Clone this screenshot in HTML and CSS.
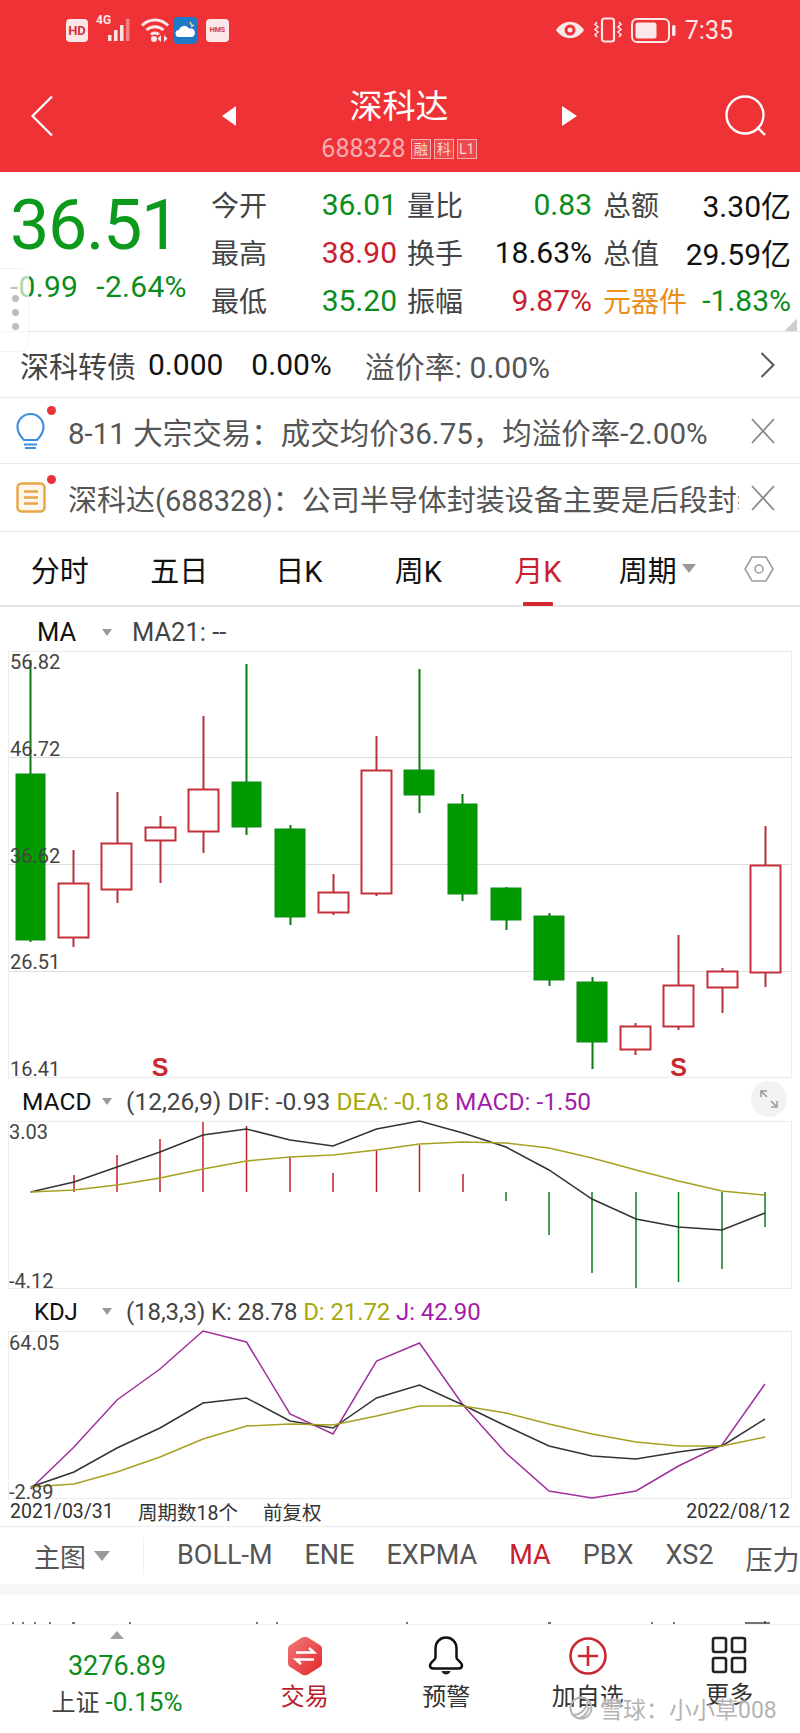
FILE: index.html
```html
<!DOCTYPE html>
<html lang="zh-CN">
<head>
    <meta charset="UTF-8">
    <meta name="viewport" content="width=device-width, initial-scale=1.0">
    <title>深科达 688328</title>
    <link rel="stylesheet" href="styles.css">
</head>
<body>
<div class="page">

    <!-- red header -->
    <header class="top">
        <div class="status">
            <div class="status-left">
                <span class="badge badge-hd">HD</span>
                <span class="net">
                    <span class="net-4g">4G</span>
                    <svg width="24" height="24" viewBox="0 0 24 24"><g fill="#fbe6e8"><rect x="0" y="17" width="3.500" height="6"/><rect x="6" y="12" width="3.500" height="11"/><rect x="12" y="7" width="3.500" height="16"/><rect x="18" y="1" width="3.500" height="22" opacity=".45"/></g></svg>
                </span>
                <svg class="wifi" width="30" height="26" viewBox="0 0 30 26"><g fill="none" stroke="#fbe6e8" stroke-width="3"><path d="M2 8.500c7-7.500 19-7.500 26 0"/><path d="M6.500 13c4.500-4.500 12.500-4.500 17 0"/><path d="M11 17.500c2-2 6-2 8 0"/></g><circle cx="14" cy="22" r="3" fill="#fbe6e8"/><path d="M21 18v7l-3.500-3.500zM24 18v7l3.500-3.500z" fill="#fbe6e8"/></svg>
                <svg class="weather" width="25" height="27" viewBox="0 0 25 27"><rect width="25" height="27" rx="5" fill="#1f78c8"/><path d="M6 20a3.500 3.500 0 0 1 0-7 5.500 5.500 0 0 1 10-1.500 4.500 4.500 0 0 1 3 8.500z" fill="#fff"/><path d="M17 5l1.500 3M21 8l-3 1.500" stroke="#f7dc8a" stroke-width="1.500"/></svg>
                <span class="badge badge-hms">HMS</span>
            </div>
            <div class="status-right">
                <svg width="30" height="20" viewBox="0 0 30 20"><path d="M1 10C8 -1 22 -1 29 10 22 21 8 21 1 10z" fill="#fbe6e8"/><circle cx="15" cy="10" r="5.500" fill="#ef3236"/><circle cx="15" cy="10" r="2.500" fill="#fbe6e8"/></svg>
                <svg width="30" height="26" viewBox="0 0 30 26"><rect x="9" y="1.500" width="12" height="23" rx="2.500" fill="none" stroke="#fbe6e8" stroke-width="2.200"/><path d="M4 5l-2 2.500 3 2.500-3 2.500 3 2.500-3 2.500 2 2.500M26 5l2 2.500-3 2.500 3 2.500-3 2.500 3 2.500-2 2.500" fill="none" stroke="#fbe6e8" stroke-width="1.600"/></svg>
                <svg width="46" height="25" viewBox="0 0 46 25"><rect x="1" y="1" width="37" height="23" rx="5" fill="none" stroke="#fbe6e8" stroke-width="2"/><rect x="4.500" y="4.500" width="21" height="16" rx="2.500" fill="#fbe6e8"/><rect x="41" y="7" width="3.500" height="11" rx="1.500" fill="#fbe6e8"/></svg>
                <span class="clock">7:35</span>
            </div>
        </div>
        <div class="titlebar">
            <svg class="back" width="24" height="42" viewBox="0 0 24 42"><path d="M22 1.500L2.500 21 22 40.500" fill="none" stroke="#fff" stroke-width="2.200"/></svg>
            <svg width="14" height="20" viewBox="0 0 14 20"><path d="M14 0v20L0 10z" fill="#fff"/></svg>
            <div class="title">
                <div class="title-name">深科达</div>
                <div class="title-code">688328<span class="tag">融</span><span class="tag">科</span><span class="tag">L1</span></div>
            </div>
            <svg width="15" height="20" viewBox="0 0 15 20"><path d="M0 0v20l15-10z" fill="#fff"/></svg>
            <svg class="search" width="42" height="42" viewBox="0 0 42 42"><circle cx="20" cy="20" r="18.500" fill="none" stroke="#fff" stroke-width="2.400"/><path d="M32 32l8 8" stroke="#fff" stroke-width="2.400"/></svg>
        </div>
    </header>

    <!-- quote -->
    <section class="quote">
        <div class="price-box">
            <div class="price">36.51</div>
            <div class="change"><span>-0.99</span><span>-2.64%</span></div>
        </div>
        <div class="stats">
            <span class="lbl">今开</span><span class="val green">36.01</span>
            <span class="lbl lbl-2">量比</span><span class="val green">0.83</span>
            <span class="lbl lbl-3">总额</span><span class="val">3.30亿</span>
            <span class="lbl">最高</span><span class="val red">38.90</span>
            <span class="lbl lbl-2">换手</span><span class="val">18.63%</span>
            <span class="lbl lbl-3">总值</span><span class="val">29.59亿</span>
            <span class="lbl">最低</span><span class="val green">35.20</span>
            <span class="lbl lbl-2">振幅</span><span class="val red">9.87%</span>
            <span class="lbl lbl-3 sector">元器件</span><span class="val green">-1.83%</span>
        </div>
        <div class="handle"><i></i><i></i><i></i></div>
        <div class="corner"></div>
    </section>

    <!-- info rows -->
    <div class="row row-bond">
        <span class="bond-name">深科转债</span>
        <span class="bond-val">0.000</span>
        <span class="bond-pct">0.00%</span>
        <span class="bond-rate">溢价率: 0.00%</span>
        <svg class="row-arrow" width="15" height="26" viewBox="0 0 15 26"><path d="M1.500 1L13.500 13 1.500 25" fill="none" stroke="#555" stroke-width="2"/></svg>
    </div>
    <div class="row row-news">
        <div class="news-icon">
            <svg width="30" height="36" viewBox="0 0 30 36"><path d="M8 27C3 22 1.500 18 1.500 14a13 13 0 0 1 26 0c0 4-1.500 8-6.500 13z" fill="none" stroke="#3f8fe0" stroke-width="2.200"/><path d="M8 31.500h13M9 35h11" stroke="#3f8fe0" stroke-width="2"/></svg>
            <i class="dot"></i>
        </div>
        <span class="news-text">8-11 大宗交易：成交均价36.75，均溢价率-2.00%</span>
        <svg class="close" width="24" height="26" viewBox="0 0 24 26"><path d="M1 1l22 24M23 1L1 25" stroke="#8a8a8a" stroke-width="1.800"/></svg>
    </div>
    <div class="row row-news row-news2">
        <div class="news-icon">
            <svg width="30" height="31" viewBox="0 0 30 31"><rect x="1.500" y="1.500" width="27" height="28" rx="4" fill="#fdf6ea" stroke="#e8a548" stroke-width="2.400"/><path d="M8 9.500h14M8 15.500h14M8 21.500h14" stroke="#e8a548" stroke-width="2.400"/></svg>
            <i class="dot"></i>
        </div>
        <span class="news-text">深科达(688328)：公司半导体封装设备主要是后段封装设备</span>
        <svg class="close" width="24" height="26" viewBox="0 0 24 26"><path d="M1 1l22 24M23 1L1 25" stroke="#8a8a8a" stroke-width="1.800"/></svg>
    </div>

    <!-- period tabs -->
    <nav class="tabs">
        <a class="tab">分时</a>
        <a class="tab">五日</a>
        <a class="tab">日K</a>
        <a class="tab">周K</a>
        <a class="tab tab-on">月K</a>
        <a class="tab">周期<i class="tri tri-tab"></i></a>
        <span class="tab-set">
            <svg width="30" height="26" viewBox="0 0 30 26"><path d="M8 1h14l7 12-7 12H8L1 13z" fill="none" stroke="#999" stroke-width="1.500"/><circle cx="15" cy="13" r="4" fill="none" stroke="#999" stroke-width="1.500"/></svg>
        </span>
    </nav>

    <div class="ind-head ind-ma">
        <span class="ind-name">MA</span><i class="tri"></i>
        <span class="ind-vals">MA21: --</span>
    </div>

    <!-- K line, coordinates are page coordinates -->
    <svg class="chart chart-k" viewBox="0 651 800 428">
        <rect class="frame" x="8.500" y="651.500" width="783" height="426"/>
        <path class="grid" d="M9 757.500h782M9 864.500h782M9 971.500h782"/>
        <g class="wick-g">
            <path d="M30.500 660V942M246.500 664V835M290.500 825V925M419.500 669V813M462.500 794V901M506.500 887V930M549.500 913V986M592.500 977V1069"/>
        </g>
        <g class="wick-r">
            <path d="M73.500 850V947M117.500 792V903M160.500 816V883M203.500 716V853M333.500 874V915M376.500 736V896M635.500 1023V1055M678.500 935V1030M722.500 968V1013M765.500 826V987"/>
        </g>
        <g class="body-g">
            <rect x="16" y="774" width="29" height="166"/>
            <rect x="232" y="782" width="29" height="45"/>
            <rect x="275" y="829" width="30" height="88"/>
            <rect x="404" y="770" width="30" height="25"/>
            <rect x="448" y="804" width="29" height="90"/>
            <rect x="491" y="888" width="30" height="32"/>
            <rect x="534" y="916" width="30" height="64"/>
            <rect x="577" y="982" width="30" height="60"/>
        </g>
        <g class="body-r">
            <rect x="58.500" y="883.500" width="30" height="54"/>
            <rect x="101.500" y="843.500" width="30" height="46"/>
            <rect x="145.500" y="827.500" width="30" height="13"/>
            <rect x="188.500" y="789.500" width="30" height="42"/>
            <rect x="318.500" y="892.500" width="30" height="20"/>
            <rect x="361.500" y="770.500" width="30" height="123"/>
            <rect x="620.500" y="1026.500" width="30" height="23"/>
            <rect x="663.500" y="985.500" width="30" height="41"/>
            <rect x="707.500" y="971.500" width="30" height="16"/>
            <rect x="750.500" y="865.500" width="30" height="107"/>
        </g>
        <g class="axis">
            <text x="10" y="669">56.82</text>
            <text x="10" y="756">46.72</text>
            <text x="10" y="863">36.62</text>
            <text x="10" y="969">26.51</text>
            <text x="10" y="1076">16.41</text>
        </g>
        <text class="mark" x="160" y="1076">S</text>
        <text class="mark" x="678.500" y="1076">S</text>
    </svg>

    <div class="ind-head ind-macd">
        <span class="ind-name">MACD</span><i class="tri"></i>
        <span class="ind-vals">(12,26,9) DIF: -0.93 <span class="c-dea">DEA: -0.18</span> <span class="c-j">MACD: -1.50</span></span>
        <span class="expand">
            <svg width="20" height="20" viewBox="0 0 20 20"><path d="M8 2H2v6M2 2l6 6M12 18h6v-6M18 18l-6-6" fill="none" stroke="#999" stroke-width="1.500"/></svg>
        </span>
    </div>

    <svg class="chart chart-macd" viewBox="0 1121 800 168">
        <rect class="frame" x="8.500" y="1121.500" width="783" height="167"/>
        <g class="bar-r">
            <path d="M74 1192V1175M117 1192V1155M160 1192V1139M203 1192V1122M246.500 1192V1126M290 1192V1157M333 1192V1173M376.500 1192V1150M419.500 1192V1145M463 1192V1174"/>
        </g>
        <g class="bar-g">
            <path d="M506 1192V1201M549 1192V1235M592 1192V1273M636 1192V1288M678.500 1192V1282M722 1192V1269M765 1192V1227"/>
        </g>
        <polyline class="ln-k" points="30.600,1192 74,1182 117,1167 160,1152 203,1135 246.500,1129 290,1140 333,1146 376.500,1129 419.500,1121 463,1133 506,1147 549,1170 592,1199 636,1219 678.500,1227 722,1230 765,1213"/>
        <polyline class="ln-d" points="30.600,1192 74,1190 117,1185 160,1178 203,1169 246.500,1161 290,1157 333,1155 376.500,1150 419.500,1144 463,1142 506,1143 549,1148 592,1158 636,1170 678.500,1181 722,1191 765,1195"/>
        <g class="axis">
            <text x="9" y="1139">3.03</text>
            <text x="9" y="1288">-4.12</text>
        </g>
    </svg>

    <div class="ind-head ind-kdj">
        <span class="ind-name">KDJ</span><i class="tri"></i>
        <span class="ind-vals">(18,3,3) K: 28.78 <span class="c-dea">D: 21.72</span> <span class="c-j">J: 42.90</span></span>
    </div>

    <svg class="chart chart-kdj" viewBox="0 1331 800 169">
        <rect class="frame" x="8.500" y="1331.500" width="783" height="167"/>
        <polyline class="ln-j" points="30.600,1489 74,1447 117,1400 160,1369 203,1331 246.500,1342 290,1414 333,1434 376.500,1361 419.500,1343 463,1405 506,1453 549,1491 592,1498 636,1491 678.500,1466 722,1445 765,1384"/>
        <polyline class="ln-k" points="30.600,1487 74,1472 117,1448 160,1428 203,1403 246.500,1398 290,1421 333,1428 376.500,1398 419.500,1385 463,1405 506,1426 549,1446 592,1456 636,1459 678.500,1452 722,1446 765,1419"/>
        <polyline class="ln-d" points="30.600,1487 74,1484 117,1472 160,1457 203,1439 246.500,1426 290,1424 333,1425 376.500,1416 419.500,1406 463,1406 506,1413 549,1424 592,1434 636,1442 678.500,1446 722,1446 765,1437"/>
        <g class="axis">
            <text x="9" y="1350">64.05</text>
            <text x="9" y="1499">-2.89</text>
        </g>
    </svg>

    <div class="dates">
        <span class="date-start">2021/03/31</span>
        <span class="date-count">周期数18个</span>
        <span>前复权</span>
        <span class="date-end">2022/08/12</span>
    </div>

    <!-- indicator switch -->
    <div class="indicators">
        <div class="ind-main">主图<i class="tri tri-main"></i></div>
        <div class="ind-list">
            <span>BOLL-M</span><span>ENE</span><span>EXPMA</span><span class="on">MA</span><span>PBX</span><span>XS2</span><span>压力支撑</span>
        </div>
    </div>
    <div class="band"></div>
    <div class="cut-row">
        <svg width="800" height="29" viewBox="0 0 800 29"><path d="M13 27v2M23 27v2M35 27v2M50 27v2M72 28h3M130 27v2M257 27v2M277 27v2M407 27v2M548 28h3M652 27v2M674 27v2M745 28h25M765 26v3" stroke="#444" stroke-width="1.500"/></svg>
    </div>

    <!-- bottom bar -->
    <footer class="bottom">
        <div class="index-box">
            <i class="tri-up"></i>
            <div class="index-val">3276.89</div>
            <div class="index-name">上证 <span class="index-pct green">-0.15%</span></div>
        </div>
        <a class="act act-on">
            <svg width="36" height="40" viewBox="0 0 36 40"><defs><linearGradient id="hexred" x1="0" y1="0" x2="1" y2="1"><stop offset="0" stop-color="#f27a7a"/><stop offset="1" stop-color="#e4262c"/></linearGradient></defs><path d="M15 1.500a6 6 0 0 1 6 0l11 7a5 5 0 0 1 3 4.500v14a5 5 0 0 1-3 4.500l-11 7a6 6 0 0 1-6 0l-11-7a5 5 0 0 1-3-4.500V13a5 5 0 0 1 3-4.500z" fill="url(#hexred)"/><path d="M9 16.500h18l-5-4.500M27 23.500H9l5 4.500" fill="none" stroke="#fff" stroke-width="2.500"/></svg>
            <span>交易</span>
        </a>
        <a class="act">
            <svg width="36" height="40" viewBox="0 0 36 40"><path d="M18 1.500c6 0 10.500 4.500 10.500 11v9c0 2.500 5.500 4.500 5.500 8 0 2-1.500 3-3.500 3h-25c-2 0-3.500-1-3.500-3 0-3.500 5.500-5.500 5.500-8v-9C7.500 6 12 1.500 18 1.500z" fill="none" stroke="#111" stroke-width="2.500"/><path d="M13.500 35h9c-1 4.500-8 4.500-9 0z" fill="#222"/></svg>
            <span>预警</span>
        </a>
        <a class="act">
            <svg width="40" height="40" viewBox="0 0 40 40"><circle cx="20" cy="20" r="17.500" fill="none" stroke="#c9282e" stroke-width="2.600"/><path d="M10 20h20M20 10v20" stroke="#c9282e" stroke-width="2.600"/></svg>
            <span>加自选</span>
        </a>
        <a class="act">
            <svg width="36" height="38" viewBox="0 0 36 38"><g fill="none" stroke="#222" stroke-width="2.600"><rect x="2" y="2" width="13" height="14" rx="2"/><rect x="21" y="2" width="13" height="14" rx="2"/><rect x="2" y="22" width="13" height="14" rx="2"/><rect x="21" y="22" width="13" height="14" rx="2"/></g></svg>
            <span>更多</span>
        </a>
        <div class="watermark">
            <svg width="28" height="24" viewBox="0 0 28 24"><g fill="none" stroke="#b5b5b5" stroke-width="2"><circle cx="13" cy="12" r="10.500"/><path d="M4 19c8 0 14-5 16-14M12 22c5-2 8-7 9-11"/></g></svg>
            <span>雪球：小小草008</span>
        </div>
    </footer>
</div>
</body>
</html>
```
FILE: styles.css
```css
* {
    box-sizing: border-box;
}
html, body {
    margin: 0;
    padding: 0;
    background: #fff;
}
body {
    font-family: Roboto, "Noto Sans CJK SC", sans-serif;
    color: #111;
}
i {
    font-style: normal;
}
svg {
    display: block;
}
.page {
    position: relative;
    width: 800px;
    height: 1733px;
    overflow: hidden;
}
.green { color: #0c8c1c; }
.red { color: #c9202e; }

/* header */
.top {
    height: 172px;
    background: #ef3236;
    color: #fff;
}
.status {
    height: 60px;
    padding: 0 67px 0 66px;
    display: flex;
    justify-content: space-between;
    align-items: center;
}
.status-left, .status-right {
    display: flex;
    align-items: center;
}
.badge {
    width: 22px;
    height: 23px;
    border-radius: 4px;
    background: #fbe6e8;
    color: #d8323a;
    display: flex;
    align-items: center;
    justify-content: center;
    font-weight: 700;
}
.badge-hd { font-size: 13px; }
.badge-hms {
    margin-left: 8px;
    width: 23px;
    font-size: 7px;
}
.net {
    position: relative;
    margin-left: 20px;
    width: 24px;
    height: 24px;
}
.net-4g {
    position: absolute;
    left: -12px;
    top: -5px;
    font-size: 12px;
    font-weight: 700;
    color: #fbe6e8;
}
.wifi { margin-left: 8px; }
.weather { margin-left: 3px; }
.status-right { gap: 8px; }
.clock {
    font-size: 25px;
    color: #fbe6e8;
}
.titlebar {
    height: 112px;
    display: grid;
    grid-template-columns: 222px 14px 1fr 15px 223px;
    align-items: center;
}
.back { margin-left: 30px; }
.search {
    justify-self: end;
    margin-right: 33px;
}
.title {
    align-self: start;
    padding-top: 24px;
    text-align: center;
}
.title-name {
    font-size: 33px;
    line-height: 46px;
}
.title-code {
    display: flex;
    justify-content: center;
    align-items: center;
    font-size: 25px;
    line-height: 38px;
    color: #f5aeb0;
}
.tag {
    width: 20px;
    height: 20px;
    margin-left: 3px;
    border: 1px solid #f5aeb0;
    background: rgba(255, 255, 255, .12);
    font-size: 14px;
    line-height: 18px;
    text-align: center;
    color: #fbd5d6;
}
.tag:first-of-type { margin-left: 5px; }

/* quote */
.quote {
    position: relative;
    height: 160px;
    display: flex;
    border-bottom: 1px solid #e8e8e8;
}
.price-box {
    width: 211px;
    flex: none;
    padding-left: 10px;
}
.price {
    padding-top: 11px;
    font-size: 70px;
    line-height: 84px;
    letter-spacing: -1.400px;
    color: #0c9a1c;
}
.change {
    display: flex;
    gap: 18px;
    font-size: 30px;
    line-height: 40px;
    letter-spacing: .3px;
    color: #0c8c1c;
}
.stats {
    flex: none;
    padding-top: 8px;
    display: grid;
    grid-template-columns: 56px 130px 66px 129px 67px 132px;
    grid-auto-rows: 48px;
    align-items: center;
    font-size: 28px;
    white-space: nowrap;
}
.lbl { color: #444; }
.lbl-2 { padding-left: 10px; }
.lbl-3 { padding-left: 11px; }
.sector { color: #e8901e; }
.val {
    text-align: right;
    font-size: 30px;
}
.handle {
    position: absolute;
    left: -10px;
    top: 96px;
    width: 39px;
    height: 84px;
    border: 1px solid #f3f3f3;
    border-radius: 10px;
    background: rgba(255, 255, 255, .65);
    padding: 26px 9px 0 0;
    display: flex;
    flex-direction: column;
    align-items: flex-end;
    gap: 7px;
}
.handle i {
    width: 7px;
    height: 7px;
    border-radius: 50%;
    background: #bdbdbd;
}
.corner {
    position: absolute;
    right: 3px;
    top: 146px;
    width: 13px;
    height: 13px;
    background: linear-gradient(135deg, transparent 50%, #cfcfcf 50%);
}

/* info rows */
.row {
    height: 66px;
    padding: 0 25px 0 20px;
    display: flex;
    align-items: center;
    border-bottom: 1px solid #ececec;
    font-size: 30px;
    white-space: nowrap;
}
.row-news2 { height: 68px; }
.bond-name {
    width: 128px;
    color: #444;
    font-size: 29px;
}
.bond-pct { margin-left: 28px; }
.bond-rate {
    margin-left: 33px;
    color: #555;
}
.row-arrow { margin-left: auto; }
.row-news { padding-left: 16px; }
.news-icon {
    position: relative;
    width: 52px;
    flex: none;
}
.dot {
    position: absolute;
    left: 31px;
    top: -7px;
    width: 9px;
    height: 9px;
    border-radius: 50%;
    background: #e8333a;
}
.news-text {
    flex: 1;
    overflow: hidden;
    font-size: 29.500px;
    color: #555;
    margin-right: 12px;
}
.row-news2 .news-text { font-size: 29px; }
.close { flex: none; }

/* tabs */
.tabs {
    height: 75px;
    display: flex;
    align-items: center;
    border-bottom: 2px solid #e6e6e6;
    font-size: 29px;
}
.tab {
    position: relative;
    width: 119.500px;
    height: 75px;
    flex: none;
    display: flex;
    align-items: center;
    justify-content: center;
}
.tab-on { color: #c9202e; }
.tab-on::after {
    content: "";
    position: absolute;
    left: 45px;
    bottom: 0;
    width: 30px;
    height: 4px;
    border-radius: 1px;
    background: #d32a30;
}
.tab-set {
    flex: 1;
    display: flex;
    justify-content: center;
}
.tri {
    display: inline-block;
    width: 0;
    height: 0;
    border-left: 5.500px solid transparent;
    border-right: 5.500px solid transparent;
    border-top: 7px solid #999;
}
.tri-tab {
    margin-left: 5px;
    border-left-width: 7px;
    border-right-width: 7px;
    border-top-width: 9px;
}

/* indicator headers */
.ind-head {
    position: relative;
    display: flex;
    align-items: center;
    font-size: 24px;
    white-space: nowrap;
    color: #444;
}
.ind-name { color: #111; }
.ind-head .tri { margin-right: 14px; }
.ind-ma {
    height: 44px;
    padding-left: 37px;
    padding-top: 6px;
    font-size: 25.500px;
}
.ind-ma .ind-name { width: 65px; }
.ind-ma .tri { margin-right: 20px; }
.ind-macd {
    height: 42px;
    padding: 3px 0 0 22px;
    font-size: 24.500px;
}
.ind-macd .ind-name { width: 80px; }
.ind-kdj {
    height: 42px;
    padding: 3px 0 0 34px;
    letter-spacing: -.1px;
}
.ind-kdj .ind-name { width: 68px; }
.c-dea { color: #a8a80c; }
.c-j { color: #a21cab; }
.expand {
    position: absolute;
    right: 13px;
    top: 2px;
    width: 36px;
    height: 36px;
    border-radius: 50%;
    background: #f2f2f2;
    display: flex;
    align-items: center;
    justify-content: center;
}

/* charts */
.chart {
    width: 800px;
    overflow: visible;
}
.chart-k { height: 428px; }
.chart-macd { height: 168px; }
.chart-kdj { height: 169px; }
.frame {
    fill: #fff;
    stroke: #ececec;
    stroke-width: 1;
}
.grid {
    fill: none;
    stroke: #dedede;
    stroke-width: 1;
}
.wick-g path { fill: none; stroke: #0a7a12; stroke-width: 2; }
.wick-r path { fill: none; stroke: #b8323a; stroke-width: 2; }
.body-g rect { fill: #009a00; stroke: #0a8a12; stroke-width: 1; }
.body-r rect { fill: #fff; stroke: #c4303a; stroke-width: 2; }
.bar-r path { fill: none; stroke: #c41f28; stroke-width: 1.500; }
.bar-g path { fill: none; stroke: #0f7f1a; stroke-width: 1.500; }
.ln-k, .ln-d, .ln-j {
    fill: none;
    stroke-width: 1.500;
}
.ln-k { stroke: #333; }
.ln-d { stroke: #a8a020; }
.ln-j { stroke: #a0309c; }
.axis text {
    font-size: 20px;
    fill: #444;
}
.mark {
    font-family: "Liberation Sans", sans-serif;
    font-size: 25px;
    font-weight: 700;
    fill: #c82a2e;
    text-anchor: middle;
}

/* dates */
.dates {
    height: 27px;
    padding: 0 10px 4px;
    display: flex;
    align-items: center;
    border-bottom: 1px solid #ececec;
    font-size: 19.500px;
    color: #333;
    white-space: nowrap;
}
.date-start { width: 128px; }
.date-count { width: 125px; }
.date-end { margin-left: auto; }

/* indicators */
.indicators {
    height: 57px;
    display: flex;
    align-items: center;
    font-size: 27px;
    color: #555;
    white-space: nowrap;
    overflow: hidden;
}
.ind-main {
    width: 144px;
    flex: none;
    height: 36px;
    padding-left: 34px;
    display: flex;
    align-items: center;
    font-size: 26px;
    border-right: 1px solid #f0f0f0;
}
.tri-main {
    margin-left: 8px;
    border-left-width: 8px;
    border-right-width: 8px;
    border-top-width: 10px;
}
.ind-list {
    display: flex;
    gap: 32px;
    padding: 6px 0 0 33px;
}
.ind-list .on { color: #c9202e; }
.band {
    height: 11px;
    background: #f6f6f6;
}
.cut-row {
    height: 29px;
}

/* bottom bar */
.bottom {
    position: relative;
    height: 110px;
    display: grid;
    grid-template-columns: 234px repeat(4, 1fr);
    border-top: 1px solid #eee;
    background: #fff;
}
.index-box {
    position: relative;
    padding-top: 23px;
    text-align: center;
    white-space: nowrap;
}
.tri-up {
    position: absolute;
    left: 110px;
    top: 6px;
    width: 0;
    height: 0;
    border-left: 7px solid transparent;
    border-right: 7px solid transparent;
    border-bottom: 8px solid #a0a0a0;
}
.index-val {
    font-size: 27px;
    line-height: 36px;
    color: #0c8c1c;
}
.index-name {
    font-size: 24px;
    line-height: 36px;
    color: #444;
}
.index-pct { font-size: 26px; }
.act {
    display: flex;
    flex-direction: column;
    align-items: center;
    padding-top: 11px;
    font-size: 24px;
    color: #333;
}
.act span {
    margin-top: 4px;
    line-height: 34px;
}
.act-on span { color: #b8202a; }
.watermark {
    position: absolute;
    left: 568px;
    top: 66px;
    display: flex;
    align-items: center;
    gap: 4px;
    font-size: 23px;
    color: rgba(165, 165, 165, .85);
    text-shadow: 0 0 2px #fff, 0 0 2px #fff;
    white-space: nowrap;
}
```
